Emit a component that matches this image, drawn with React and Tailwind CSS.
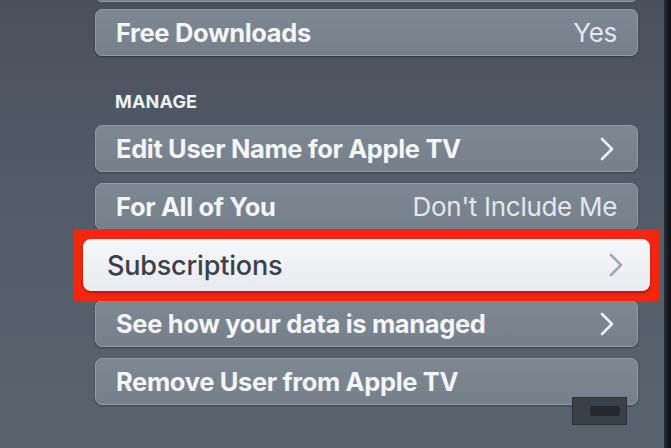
import { useState } from 'react';

const font = { fontFamily: 'Inter, "Noto Sans", sans-serif' };

function Chevron({ className }) {
  return (
    <svg width="16" height="26" viewBox="0 0 16 26" className={className}>
      <polyline points="3,3 13,13 3,23" fill="none" stroke="currentColor" strokeWidth="2.6" strokeLinecap="round" strokeLinejoin="round" />
    </svg>
  );
}

function Row({ label, value, chevron, className = '' }) {
  return (
    <div className={`h-[47px] rounded-[7px] border border-[#909ba6] bg-gradient-to-b from-[#7d8893] to-[#75808b] flex items-center pl-[20px] pr-[20px] shadow-[0_1px_2px_rgba(0,0,0,0.35)] ${className}`}>
      <span className="flex-1 text-[25.5px] font-bold tracking-[-0.35px] text-[#f3f5f7] leading-none">{label}</span>
      {value && <span className="text-[26px] font-normal tracking-[-0.3px] text-[#e3e7eb] leading-none">{value}</span>}
      {chevron && <Chevron className="text-[#eef1f4] mr-[2px]" />}
    </div>
  );
}

export default function App() {
  const [selected] = useState('Subscriptions');

  return (
    <div style={font} className="relative w-[671px] h-[448px] overflow-hidden flex bg-gradient-to-b from-[#48515c] via-[#545e6a] to-[#58636e]">
      <div className="w-[95px] shrink-0" />
      <div className="w-[543px] shrink-0 flex flex-col">
        <div className="h-[47px] -mt-[45px] rounded-[7px] border border-[#909ba6] bg-[#78838e]" />
        <Row label="Free Downloads" value="Yes" className="mt-[7px]" />
        <div className="h-[69px] flex items-start pt-[37px] pl-[20px]">
          <span className="text-[18px] font-bold tracking-[0.2px] text-[#eef1f4] leading-none">MANAGE</span>
        </div>
        <Row label="Edit User Name for Apple TV" chevron />
        <Row label="For All of You" value="Don't Include Me" className="mt-[11px]" />
        <div className="relative z-10 -mt-[1px] -mx-[22px] rounded-[3px] bg-[#f4260f] p-[10px]">
          <div className="h-[52px] rounded-[8px] bg-gradient-to-b from-[#f6f7f9] to-[#e7eaee] flex items-center pl-[24px] pr-[26px] shadow-[0_2px_3px_rgba(0,0,0,0.3)]">
            <span className="flex-1 text-[27px] font-medium tracking-[-0.2px] text-[#3b4048] leading-none">{selected}</span>
            <Chevron className="text-[#a2a8b0]" />
          </div>
        </div>
        <Row label="See how your data is managed" chevron className="-mt-[1px]" />
        <Row label="Remove User from Apple TV" className="mt-[11px]" />
      </div>
      <div className="flex-1" />
      <div className="w-[7px] shrink-0 bg-gradient-to-r from-[#2a3038] to-[#0c0e11]" />
      <div className="absolute left-[572px] top-[397px] w-[55px] h-[28px] bg-[#3a4048] border border-[#2c3138] flex items-center justify-end pr-[6px]">
        <div className="w-[30px] h-[10px] bg-[#262a30] rounded-[2px]" />
      </div>
    </div>
  );
}
